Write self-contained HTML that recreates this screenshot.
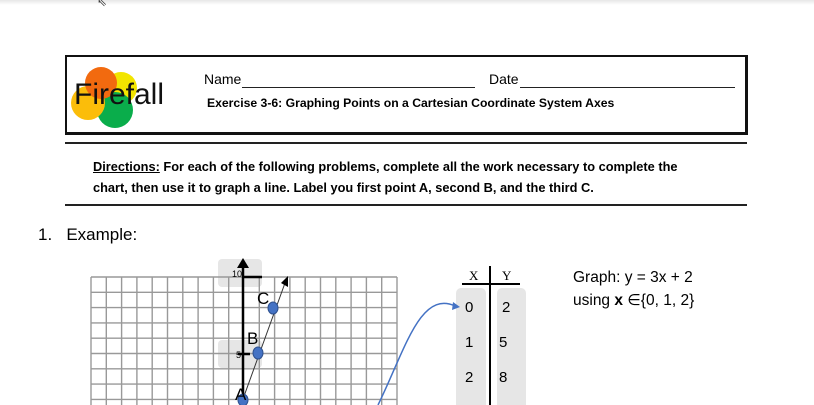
<!DOCTYPE html>
<html><head><meta charset="utf-8"><style>
body{margin:0;width:814px;height:405px;overflow:hidden;background:#fff;position:relative;font-family:"Liberation Sans",Carlito,sans-serif}
.a{position:absolute;white-space:nowrap}
</style></head><body>
<div class="a" style="left:0;top:0;width:814px;height:5px;background:linear-gradient(#e6e6e6,#fff)"></div>
<div class="a" style="left:97px;top:-5px;font-size:12px;color:#333">⇖</div>
<div class="a" style="left:65px;top:55px;width:678px;height:75px;border:2px solid #111;border-right-width:3px;border-bottom-width:3px"></div>
<svg class="a" style="left:70px;top:62px" width="70" height="70">
<circle cx="51" cy="26" r="16" fill="#f2e500"/>
<circle cx="45" cy="48" r="18" fill="#0aad4b"/>
<circle cx="18" cy="41" r="17" fill="#fbbd0a"/>
<circle cx="31" cy="21" r="16" fill="#f26a0f"/>
</svg>
<div class="a" style="left:74px;top:78px;font-size:30px;color:#111">Firefall</div>
<div class="a" style="left:204px;top:71px;font-size:14px">Name</div>
<div class="a" style="left:242px;top:87px;width:233px;height:1px;background:#222"></div>
<div class="a" style="left:489px;top:71px;font-size:14px">Date</div>
<div class="a" style="left:520px;top:87px;width:215px;height:1px;background:#222"></div>
<div class="a" style="left:207px;top:96px;font-size:12.2px;font-weight:bold">Exercise 3-6: Graphing Points on a Cartesian Coordinate System Axes</div>
<div class="a" style="left:65px;top:142px;width:682px;height:2px;background:#222"></div>
<div class="a" style="left:93px;top:156px;font-size:12.8px;font-weight:bold;line-height:21px"><u>Directions:</u> For each of the following problems, complete all the work necessary to complete the<br>chart, then use it to graph a line. Label you first point A, second B, and the third C.</div>
<div class="a" style="left:65px;top:204px;width:682px;height:2px;background:#222"></div>
<div class="a" style="left:38px;top:225px;font-size:17px">1.&nbsp;&nbsp;&nbsp;Example:</div>
<svg class="a" style="left:0;top:0" width="814" height="405">
<rect x="218" y="259" width="44" height="28" rx="4" fill="#e6e6e6"/>
<rect x="218" y="340" width="44" height="28" rx="4" fill="#e6e6e6"/>
<g stroke="#999" stroke-width="1.4">
<path d="M91 277V405M106.3 277V405M121.6 277V405M136.9 277V405M152.2 277V405M167.5 277V405M182.8 277V405M198.1 277V405M213.4 277V405M228.7 277V405M259.3 277V405M274.6 277V405M289.9 277V405M305.2 277V405M320.5 277V405M335.8 277V405M351.1 277V405M366.4 277V405M381.7 277V405M397 277V405"/>
<path d="M91 277H397M91 292.3H397M91 307.6H397M91 322.9H397M91 338.2H397M91 353.5H397M91 368.8H397M91 384.1H397M91 399.4H397"/>
</g>
<path d="M243 405V266M243 277H262M238 354H250" stroke="#000" stroke-width="2.5"/>
<path d="M237 268L243 258L249 268Z" fill="#000"/>
<text x="232" y="277" font-size="9" font-family="Liberation Sans">10</text>
<text x="236" y="358" font-size="9" font-family="Liberation Sans">5</text>
<path d="M239 410L285 283" stroke="#333" stroke-width="1"/>
<path d="M281 283L288 276L288 287Z" fill="#000"/>
<g fill="#4472c4" stroke="#2f528f" stroke-width="1"><ellipse cx="243" cy="400" rx="5" ry="6"/><ellipse cx="258" cy="353" rx="5" ry="6"/><ellipse cx="273" cy="308" rx="5" ry="6"/></g>
<g font-family="Liberation Sans" font-size="17"><text x="235" y="400">A</text><text x="247" y="344">B</text><text x="257" y="304">C</text></g>
<rect x="456" y="288" width="30" height="125" rx="5" fill="#e6e6e6"/>
<rect x="497" y="288" width="29" height="125" rx="5" fill="#e6e6e6"/>
<path d="M462 284H520M490 266V405" stroke="#000" stroke-width="2"/>
<g font-family="Liberation Serif" font-size="13"><text x="469" y="280">X</text><text x="502" y="280">Y</text></g>
<g font-family="Liberation Sans" font-size="15"><text x="465" y="312">0</text><text x="502" y="312">2</text><text x="465" y="347">1</text><text x="499" y="347">5</text><text x="465" y="382">2</text><text x="499" y="382">8</text></g>
<path d="M378 405C405 350 420 290 455 306" stroke="#4472c4" stroke-width="1.5" fill="none"/>
<path d="M453 302L460 307L452 310Z" fill="#4472c4"/>
<g font-family="Liberation Sans" font-size="15.5"><text x="573" y="282">Graph: y = 3x + 2</text><text x="573" y="305">using <tspan font-weight="bold">x</tspan> ∈{0, 1, 2}</text></g>
</svg>
</body></html>
